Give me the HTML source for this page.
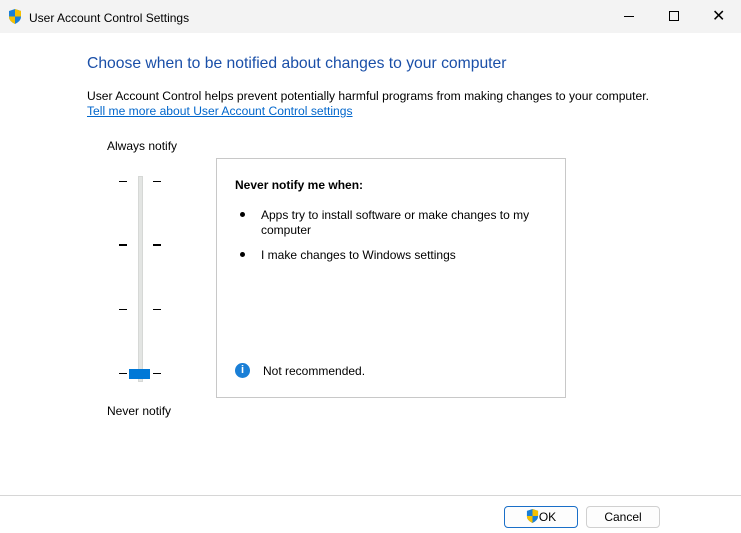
<!DOCTYPE html>
<html><head><style>
body{margin:0;width:741px;height:533px;background:#fff;font-family:"Liberation Sans",sans-serif;position:relative;overflow:hidden;font-size:12px;color:#000}
.a{position:absolute;white-space:nowrap}
.tb{position:absolute;left:0;top:0;width:741px;height:33px;background:#f3f3f3}
.tick{position:absolute;height:1px;width:8px;background:#000}
.btn{position:absolute;top:506px;width:72px;height:20px;border:1px solid #d0d0d0;border-radius:4px;background:#fdfdfd;text-align:center;line-height:20px;font-size:12px}
.dot{position:absolute;width:5px;height:5px;border-radius:50%;background:#000}
</style></head><body>
<div class="tb"></div>
<svg class="a" style="left:8px;top:9px" width="14" height="15" viewBox="0 0 14 15"><path d="M7 0 L13 2 L13 8 Q13 12 7 15 Q1 12 1 8 L1 2 Z" fill="#1a7fd6"/><path d="M7 0 L13 2 L13 7.5 L7 7.5Z M1 7.5 L7 7.5 L7 15 Q1 12 1 8Z" fill="#f6c000"/></svg>
<div class="a" style="left:29px;top:11px;font-size:12px">User Account Control Settings</div>
<div class="a" style="left:624px;top:16px;width:10px;height:1px;background:#000"></div>
<div class="a" style="left:669px;top:11px;width:8px;height:8px;border:1px solid #000"></div>
<div class="a" style="left:712px;top:6px;font-size:16px">✕</div>
<div class="a" style="left:87px;top:55px;font-size:15.7px;color:#1a4fa8">Choose when to be notified about changes to your computer</div>
<div class="a" style="left:87px;top:89px;font-size:12.1px">User Account Control helps prevent potentially harmful programs from making changes to your computer.</div>
<div class="a" style="left:87px;top:104px;font-size:12.1px;color:#0066cc;text-decoration:underline">Tell me more about User Account Control settings</div>
<div class="a" style="left:107px;top:139px">Always notify</div>
<div class="a" style="left:107px;top:404px">Never notify</div>
<div class="a" style="left:138px;top:176px;width:3px;height:204px;background:#e3e5e3;border:1px solid #d6d8d6"></div>
<div class="tick" style="left:119px;top:181px"></div><div class="tick" style="left:153px;top:181px"></div>
<div class="tick" style="left:119px;top:244px;height:2px"></div><div class="tick" style="left:153px;top:244px;height:2px"></div>
<div class="tick" style="left:119px;top:309px"></div><div class="tick" style="left:153px;top:309px"></div>
<div class="tick" style="left:119px;top:373px"></div><div class="tick" style="left:153px;top:373px"></div>
<div class="a" style="left:129px;top:369px;width:21px;height:10px;background:#0078d7"></div>
<div class="a" style="left:216px;top:158px;width:348px;height:238px;border:1px solid #c8c8c8"></div>
<div class="a" style="left:235px;top:178px;font-weight:bold">Never notify me when:</div>
<div class="dot" style="left:240px;top:212px"></div>
<div class="a" style="left:261px;top:208px;line-height:15px">Apps try to install software or make changes to my<br>computer</div>
<div class="dot" style="left:240px;top:252px"></div>
<div class="a" style="left:261px;top:248px">I make changes to Windows settings</div>
<div class="a" style="left:235px;top:363px;width:15px;height:15px;border-radius:50%;background:#1a7fd6;color:#fff;font-weight:bold;font-size:11px;text-align:center;line-height:15px">i</div>
<div class="a" style="left:263px;top:364px">Not recommended.</div>
<div class="a" style="left:0;top:495px;width:741px;height:1px;background:#d6d6d6"></div>
<div class="btn" style="left:504px;border-color:#1a6fc8"><svg style="vertical-align:-2px" width="13" height="14" viewBox="0 0 14 15"><path d="M7 0 L13 2 L13 8 Q13 12 7 15 Q1 12 1 8 L1 2 Z" fill="#1a7fd6"/><path d="M7 0 L13 2 L13 7.5 L7 7.5Z M1 7.5 L7 7.5 L7 15 Q1 12 1 8Z" fill="#f6c000"/></svg>OK</div>
<div class="btn" style="left:586px">Cancel</div>
</body></html>
